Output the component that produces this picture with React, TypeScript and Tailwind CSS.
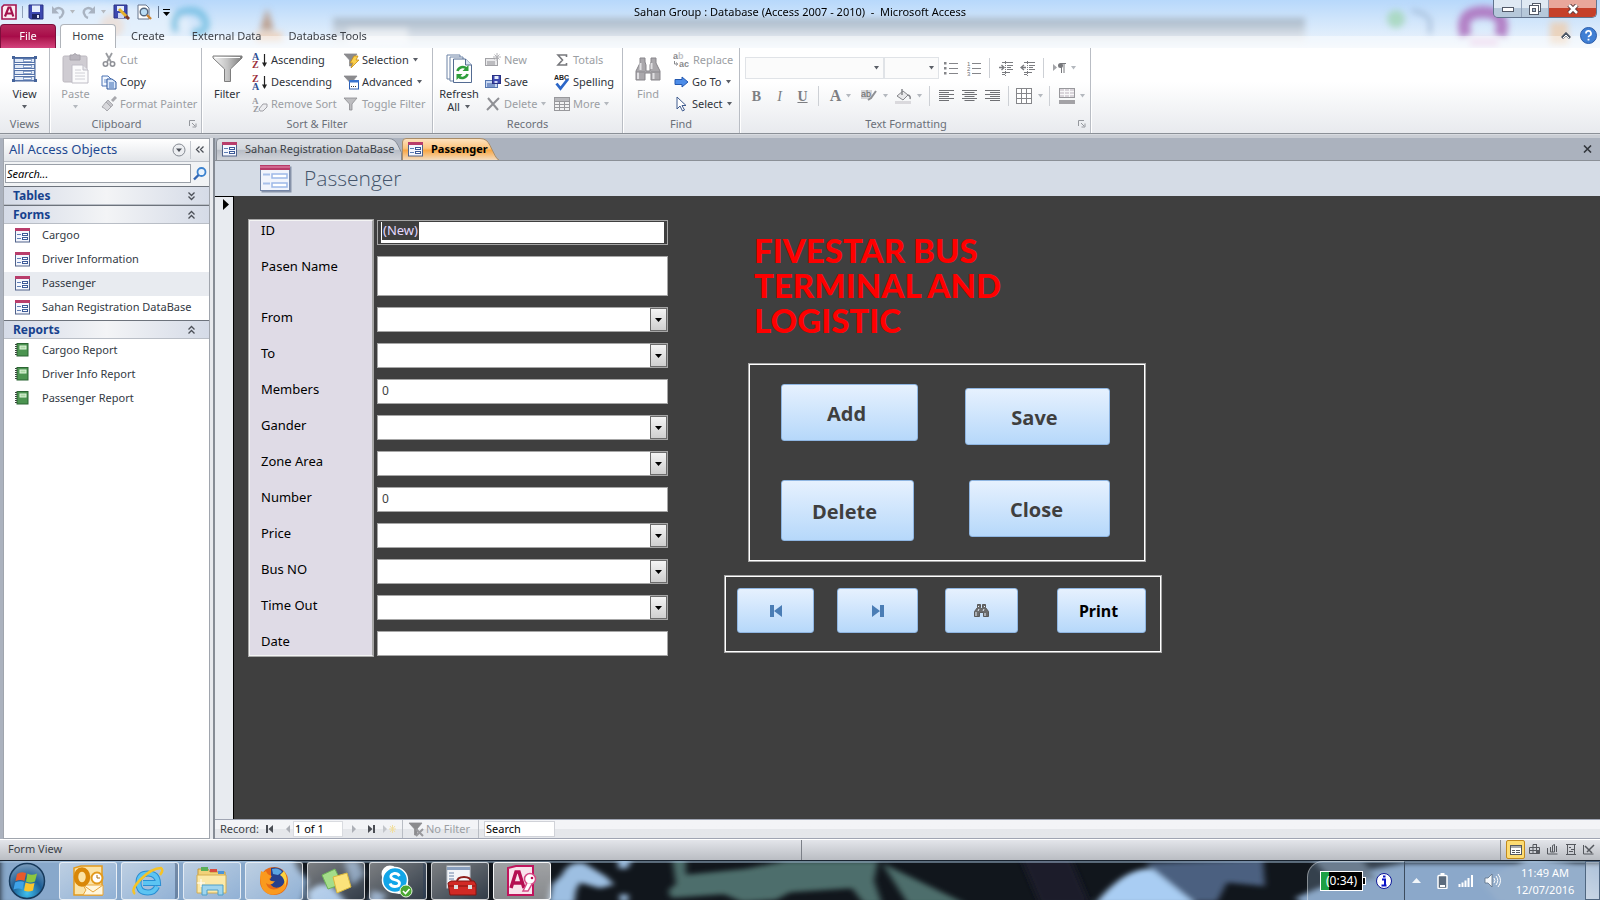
import { useState, type ReactNode } from 'react'
import clsx from 'clsx'

interface NavItem {
  name: string
  active?: boolean
}

interface Field {
  id: string
  label: string
  kind: 'new' | 'text' | 'tall' | 'combo'
  value?: string
}

const FORMS: NavItem[] = [
  { name: 'Cargoo' },
  { name: 'Driver Information' },
  { name: 'Passenger', active: true },
  { name: 'Sahan Registration DataBase' },
]

const REPORTS: NavItem[] = [{ name: 'Cargoo Report' }, { name: 'Driver Info Report' }, { name: 'Passenger Report' }]

const FIELDS: Field[] = [
  { id: 'id', label: 'ID', kind: 'new', value: '(New)' },
  { id: 'pasen-name', label: 'Pasen Name', kind: 'tall' },
  { id: 'from', label: 'From', kind: 'combo' },
  { id: 'to', label: 'To', kind: 'combo' },
  { id: 'members', label: 'Members', kind: 'text', value: '0' },
  { id: 'gander', label: 'Gander', kind: 'combo' },
  { id: 'zone-area', label: 'Zone Area', kind: 'combo' },
  { id: 'number', label: 'Number', kind: 'text', value: '0' },
  { id: 'price', label: 'Price', kind: 'combo' },
  { id: 'bus-no', label: 'Bus NO', kind: 'combo' },
  { id: 'time-out', label: 'Time Out', kind: 'combo' },
  { id: 'date', label: 'Date', kind: 'text' },
]

/* ---------- icons ---------- */

function Svg({ w = 16, h = 16, children }: { w?: number; h?: number; children: ReactNode }) {
  return (
    <svg width={w} height={h} viewBox={`0 0 ${w} ${h}`} className="shrink-0" aria-hidden="true">
      {children}
    </svg>
  )
}

function Caret({ muted }: { muted?: boolean }) {
  return (
    <Svg w={7} h={4}>
      <path d="M1 0h5L3.500 3.500z" fill={muted ? '#b4b8be' : '#5a5e66'} />
    </Svg>
  )
}

function AccessLogo() {
  return (
    <Svg w={16} h={16}>
      <path d="M3 1h12v14H1V3z" fill="#fbeaf1" stroke="#a4124d" strokeWidth="1.600" />
      <path d="M4 12.500L7.500 3.500h1.800l3 9M5.500 9.500h5.500" fill="none" stroke="#a4124d" strokeWidth="2.200" />
    </Svg>
  )
}

function SaveIcon() {
  return (
    <Svg w={16} h={16}>
      <path d="M1 1h14v14H2.500L1 13.500z" fill="#3d49b0" stroke="#2a3284" />
      <rect x="4" y="1.500" width="8" height="6.500" fill="#e6eefc" />
      <rect x="4" y="10" width="8" height="5" fill="#1d2560" />
      <rect x="9" y="11" width="2" height="3" fill="#dfe4f6" />
    </Svg>
  )
}

function UndoIcon({ flip }: { flip?: boolean }) {
  return (
    <Svg w={14} h={14}>
      <g transform={flip ? 'translate(14 0) scale(-1 1)' : undefined}>
        <path d="M3 5.500Q6 2 9.500 3.500t2.500 5-4 4.500" fill="none" stroke="#a9b3c1" strokeWidth="2.400" />
        <path d="M1 1v7.500h7z" fill="#a9b3c1" />
      </g>
    </Svg>
  )
}

function SaveEditIcon() {
  return (
    <Svg w={17} h={16}>
      <path d="M1 1h13v13H1z" fill="#3d49b0" stroke="#2a3284" />
      <rect x="4" y="2" width="7" height="5" fill="#e6eefc" />
      <path d="M5 9h6v5H5z" fill="#cdd6f4" />
      <path d="M6 5l8 8" stroke="#e7b22c" strokeWidth="3" />
      <path d="M13 12l3 3" stroke="#7d3a2c" strokeWidth="3" />
    </Svg>
  )
}

function PreviewIcon() {
  return (
    <Svg w={16} h={16}>
      <path d="M2 1h8l3 3v11H2z" fill="#fff" stroke="#66758c" />
      <circle cx="8" cy="8" r="3.800" fill="#b9dcf5" stroke="#53657d" strokeWidth="1.400" />
      <path d="M11 11l4 4" stroke="#c9822f" strokeWidth="2.400" />
    </Svg>
  )
}

function FormIcon() {
  return (
    <Svg w={15} h={15}>
      <rect x="0.500" y="0.500" width="14" height="13.500" fill="#f4f6fd" stroke="#50628a" />
      <rect x="0" y="0" width="15" height="3" fill="#b93d6b" />
      <path d="M2 6.500h4M2 10.500h4" stroke="#5f7fb6" />
      <rect x="7.500" y="5.500" width="5" height="2" fill="#fff" stroke="#3c5a98" />
      <rect x="7.500" y="9.500" width="5" height="2" fill="#fff" stroke="#3c5a98" />
    </Svg>
  )
}

function FormIconLarge() {
  return (
    <Svg w={32} h={28}>
      <rect x="1.500" y="1.500" width="30" height="26" fill="#8793a9" />
      <rect x="0.500" y="0.500" width="29" height="25" fill="#f1f4fc" stroke="#7385a6" />
      <rect x="0" y="0" width="30" height="5" fill="#b73a68" />
      <rect x="0" y="1" width="30" height="2" fill="#d0668e" />
      <path d="M3 9.500h7M3 18.500h7" stroke="#a8c0ea" strokeWidth="2" />
      <rect x="12" y="9" width="15" height="4" fill="#fff" stroke="#9db8e8" strokeWidth="1.500" />
      <rect x="12" y="18" width="15" height="4" fill="#fff" stroke="#9db8e8" strokeWidth="1.500" />
    </Svg>
  )
}

function ReportIcon() {
  return (
    <Svg w={15} h={15}>
      <rect x="2" y="0.500" width="11" height="12.500" fill="#4b9450" stroke="#2b6432" />
      <rect x="5" y="3" width="6" height="3" fill="#a9d9a4" stroke="#e0f3dc" />
      <path d="M1 1v12" stroke="#3b463d" strokeWidth="2" strokeDasharray="1 1" />
    </Svg>
  )
}

function ViewIcon() {
  return (
    <Svg w={27} h={28}>
      <path d="M3 1v26M24 1v26M1 2.500h25M1 26h25" stroke="#44639a" />
      {[4, 10, 16, 22].map((y) => (
        <g key={y}>
          <rect x="3.500" y={y - 0.500} width="20" height="4" fill="#dfe8f6" stroke="#5674aa" />
          <rect x="12.500" y={y + 0.500} width="8" height="2" fill="#fff" stroke="#7591c0" strokeWidth="0.800" />
        </g>
      ))}
      <path d="M1 1h3v3H1zM23 1h3v3h-3zM1 24h3v3H1zM23 24h3v3h-3z" fill="#44639a" />
    </Svg>
  )
}

function PasteIcon() {
  return (
    <Svg w={28} h={32}>
      <rect x="1" y="3" width="24" height="26" rx="1.500" fill="#cfccd2" stroke="#bcb8bf" />
      <path d="M8 2h3q2-3 4 0h3v5H8z" fill="#b9b5bd" stroke="#a8a4ac" />
      <path d="M10 12h11l5 5v13H10z" fill="#fbfbfc" stroke="#bfbdc6" />
      <path d="M21 12v5h5" fill="#e8e8ec" stroke="#bfbdc6" />
      <path d="M13 17h6M13 20h10M13 23h10M13 26h10" stroke="#d0d0d6" />
    </Svg>
  )
}

function CutIcon() {
  return (
    <Svg>
      <path d="M5 1l5 9M11 1L6 10" stroke="#9a9ca1" strokeWidth="1.800" />
      <circle cx="4.500" cy="12" r="2.200" fill="none" stroke="#8f9197" strokeWidth="1.600" />
      <circle cx="11.500" cy="12" r="2.200" fill="none" stroke="#8f9197" strokeWidth="1.600" />
    </Svg>
  )
}

function CopyIcon() {
  return (
    <Svg>
      <path d="M1 2h6l3 3v7H1z" fill="#f3f8ff" stroke="#4a72b4" />
      <path d="M3 6h4M3 8h3" stroke="#6f95d0" />
      <path d="M6 5h5l4 3v7H6z" fill="#dce9fb" stroke="#2c579c" />
      <path d="M8 9h5M8 11h5M8 13h5" stroke="#3b6ab3" />
    </Svg>
  )
}

function PainterIcon() {
  return (
    <Svg>
      <path d="M15 1l-4 4" stroke="#a8a8ad" strokeWidth="3" />
      <path d="M7 4l5 5-2 2-5-5z" fill="#c4c4c9" stroke="#9d9da2" strokeWidth="0.800" />
      <path d="M5 6l5 5-4 4q-2-3-5-4z" fill="#d8d8dc" stroke="#a8a8ad" />
    </Svg>
  )
}

function FunnelBig() {
  return (
    <Svg w={31} h={28}>
      <defs>
        <linearGradient id="funnel" x1="0" x2="1">
          <stop offset="0" stopColor="#f4f4f4" />
          <stop offset="0.500" stopColor="#c4c4c4" />
          <stop offset="1" stopColor="#7e7e7e" />
        </linearGradient>
      </defs>
      <path d="M1 1h29v2L18.500 14v12.500h-6V14L1 3z" fill="url(#funnel)" stroke="#7d7d7d" />
      <path d="M3 2.500h25" stroke="#fff" />
    </Svg>
  )
}

function SortIcon({ top, bottom }: { top: 'A' | 'Z'; bottom: 'A' | 'Z' }) {
  const color = (l: string) => (l === 'A' ? '#2f4f93' : '#9c2f3b')
  return (
    <Svg w={16} h={17}>
      <text x="0" y="8" fontFamily="Liberation Serif" fontWeight="700" fontSize="10" fill={color(top)}>
        {top}
      </text>
      <text x="0" y="16" fontFamily="Liberation Serif" fontWeight="700" fontSize="10" fill={color(bottom)}>
        {bottom}
      </text>
      <path d="M12.500 2v12" stroke="#222" strokeWidth="1.200" />
      <path d="M10 10.500h5L12.500 15z" fill="#222" />
    </Svg>
  )
}

function RemoveSortIcon() {
  return (
    <Svg w={16} h={17}>
      <text x="0" y="8" fontFamily="Liberation Serif" fontWeight="700" fontSize="9" fill="#9a9aa0">
        A
      </text>
      <text x="1" y="16" fontFamily="Liberation Serif" fontWeight="700" fontSize="9" fill="#9a9aa0">
        Z
      </text>
      <path d="M7 13l4-5h4v3l-4 4H8z" fill="#ececef" stroke="#a0a0a6" />
    </Svg>
  )
}

function FunnelSmall({ extra }: { extra?: 'bolt' | 'window' | 'cross' }) {
  return (
    <Svg>
      <path d="M1 2h13L9 8v6H6.500V8z" fill={extra === undefined ? '#bdbdc0' : '#8b8b8e'} stroke="#8c8c8f" strokeWidth="0.800" />
      {extra === 'bolt' && <path d="M11 4h4l-2 4h3l-8 8 2-5H7z" fill="#fbd04c" stroke="#c58b14" strokeWidth="0.800" />}
      {extra === 'window' && (
        <>
          <rect x="6.500" y="6.500" width="9" height="8.500" fill="#fff" stroke="#2c5db0" />
          <rect x="6" y="6" width="10" height="2.500" fill="#3a74d0" />
          <path d="M8 12.500h6" stroke="#333" strokeDasharray="1 1" />
        </>
      )}
      {extra === 'cross' && <path d="M8 8l7 7M15 8l-7 7" stroke="#98989c" strokeWidth="2" />}
    </Svg>
  )
}

function RefreshIcon() {
  return (
    <Svg w={27} h={30}>
      <path d="M1 1h13v24H1z" fill="#fff" stroke="#6d83a6" />
      <path d="M4 3h13v24H4z" fill="#fff" stroke="#6d83a6" />
      <path d="M7.500 5h12l6 6v17.500h-18z" fill="#fdfefe" stroke="#536b92" />
      <path d="M19.500 5v6h6" fill="#d9e4f2" stroke="#536b92" />
      <path d="M11.500 17a5.500 5.500 0 0 1 9-2.500M21.500 20a5.500 5.500 0 0 1-9 2.500" fill="none" stroke="#2f9e3c" strokeWidth="2.600" />
      <path d="M22.500 11v6h-6zM10.500 26v-6h6z" fill="#2f9e3c" />
    </Svg>
  )
}

function NewRecordIcon() {
  return (
    <Svg>
      <rect x="0.500" y="6.500" width="12" height="7" fill="#e9e9eb" stroke="#a2a2a6" />
      <path d="M2 10h8M2 12h8" stroke="#8f8f94" />
      <path d="M12 1v8M8 5h8M9.500 2.500l5 5M14.500 2.500l-5 5" stroke="#b4b4b8" />
    </Svg>
  )
}

function SaveRecordIcon() {
  return (
    <Svg>
      <rect x="0.500" y="6.500" width="12" height="7" fill="#c9d8f2" stroke="#5576b0" />
      <path d="M2 10h8M2 12h8" stroke="#2f55a0" />
      <rect x="7.500" y="1.500" width="8" height="8" fill="#3d49b0" stroke="#2a3284" />
      <rect x="9.500" y="2" width="4" height="3" fill="#e6eefc" />
      <rect x="9.500" y="7" width="3" height="2" fill="#cfd8f4" />
    </Svg>
  )
}

function DeleteIcon() {
  return (
    <Svg>
      <path d="M3 2l10 12M14 2L2 14" fill="none" stroke="#8f9095" strokeWidth="2" />
    </Svg>
  )
}

function SigmaIcon() {
  return (
    <Svg>
      <path d="M12.500 5V3H4l4.500 5L4 13h8.500v-2" fill="none" stroke="#77787c" strokeWidth="1.600" />
    </Svg>
  )
}

function SpellingIcon() {
  return (
    <Svg w={16} h={17}>
      <text x="0" y="6" fontFamily="Liberation Sans" fontSize="7" fontWeight="700" fill="#222">
        ABC
      </text>
      <path d="M2.500 9.500l4 5L14 5" fill="none" stroke="#2b66c8" strokeWidth="2.800" />
    </Svg>
  )
}

function TableIcon() {
  return (
    <Svg>
      <rect x="0.500" y="1.500" width="15" height="13" fill="#f2f2f3" stroke="#98989c" />
      <rect x="1" y="2" width="14" height="3" fill="#b9b9bd" />
      <path d="M1 5.500h14M1 8.500h14M1 11.500h14M5.500 5v9M10.500 5v9" stroke="#98989c" />
    </Svg>
  )
}

function BinocularsIcon() {
  return (
    <Svg w={28} h={28}>
      <path d="M6 3h5v4l1 3v6h4v-6l1-3V3h5v5l4 8v9h-9v-7h-6v7H2v-9l4-8z" fill="#aaa8ac" stroke="#88868b" />
      <path d="M4 17v7M6.500 8v7M19.500 18v6M17.500 8v6" stroke="#e0dfe2" strokeWidth="2" />
      <path d="M2 17h9M17 17h9" stroke="#8b898e" />
    </Svg>
  )
}

function ReplaceIcon() {
  return (
    <Svg w={17} h={16}>
      <text x="0" y="7" fontFamily="Liberation Sans" fontWeight="700" fontSize="9" fill="#88898d">
        a<tspan fill="#c2c2c6">b</tspan>
      </text>
      <text x="6" y="15" fontFamily="Liberation Sans" fontWeight="700" fontSize="9" fill="#88898d">
        ac
      </text>
      <path d="M1.500 9v3h3M3 10.500L4.800 12 3 13.500" fill="none" stroke="#88898d" />
    </Svg>
  )
}

function GoToIcon() {
  return (
    <Svg>
      <path d="M2 5.500h7V3l6 5-6 5v-2.500H2z" fill="#4c8ce8" stroke="#2559b0" />
    </Svg>
  )
}

function PointerIcon() {
  return (
    <Svg>
      <path d="M4 1v12l3-3 2.500 5 2-1L9 9.500h4z" fill="#fff" stroke="#3e5a8e" />
    </Svg>
  )
}

function ListIcon({ numbered }: { numbered?: boolean }) {
  return (
    <Svg w={14} h={16}>
      {[3, 8, 13].map((y, i) => (
        <g key={y}>
          <path d={`M5 ${y}.500h9`} stroke="#85868a" />
          {numbered ? (
            <text x="0" y={y + 3} fontFamily="Liberation Sans" fontSize="6" fill="#6f7074">
              {i + 1}
            </text>
          ) : (
            <rect x="0" y={y - 1} width="2.500" height="2.500" fill="#85868a" />
          )}
        </g>
      ))}
    </Svg>
  )
}

function IndentIcon({ out }: { out?: boolean }) {
  return (
    <Svg>
      <path d="M4 2.500h11M9 5.500h6M9 7.500h4M9 9.500h6M4 12.500h8M4 14.500h3" stroke="#7b7c80" />
      <path d={out ? 'M1 7.500h5M4 5L1 7.500 4 10' : 'M1 7.500h5M3.500 5L6 7.500 3.500 10'} fill="none" stroke="#7b7c80" strokeWidth="1.400" />
      <path d="M7.500 1v15" stroke="#7b7c80" strokeDasharray="1 1" />
    </Svg>
  )
}

function AlignIcon({ side }: { side: 'left' | 'center' | 'right' }) {
  return (
    <Svg w={15} h={14}>
      {[1, 3, 5, 7, 9, 11].map((y, i) => {
        const w = i % 2 === 0 ? 15 : 10
        const x = side === 'left' ? 0 : side === 'right' ? 15 - w : (15 - w) / 2
        return <rect key={y} x={x} y={y} width={w} height="1" fill="#6f7074" />
      })}
    </Svg>
  )
}

function PilcrowIcon() {
  return (
    <Svg w={14} h={12}>
      <path d="M1 2v7l4-3.500z" fill="#a3a4a8" />
      <path d="M9.500 11V1M12 11V1M14 1.500H8.500" stroke="#77787c" />
      <circle cx="8.500" cy="3.500" r="2.500" fill="#77787c" />
    </Svg>
  )
}

function HighlightIcon() {
  return (
    <Svg w={17} h={14}>
      <rect x="0" y="1" width="11" height="9" fill="#d6d6d9" />
      <text x="0" y="8" fontFamily="Liberation Sans" fontSize="9" fill="#66676b">
        ab
      </text>
      <path d="M15 2l-5 7-3 2" fill="none" stroke="#8f9094" strokeWidth="2" />
    </Svg>
  )
}

function BucketIcon() {
  return (
    <Svg w={17} h={17}>
      <path d="M2 8l6-5 5 4-5 5z" fill="#e9e9eb" stroke="#85868a" />
      <path d="M7 1v6M13 7q3 1 2 4" fill="none" stroke="#85868a" strokeWidth="1.500" />
      <rect x="0" y="13" width="16" height="3" fill="#dad9dd" />
    </Svg>
  )
}

function GridIcon() {
  return (
    <Svg w={17} h={17}>
      <rect x="0.500" y="0.500" width="15" height="15" fill="#fff" stroke="#85868a" />
      <path d="M5.500 0v16M10.500 0v16M0 5.500h16M0 10.500h16" stroke="#85868a" />
    </Svg>
  )
}

function RowFillIcon() {
  return (
    <Svg w={16} h={16}>
      <rect x="0.500" y="0.500" width="15" height="9" fill="#d9d4da" stroke="#98989c" />
      <path d="M1 3.500h14M1 6.500h14M5.500 1v8M10.500 1v8" stroke="#f7f7f8" />
      <rect x="0" y="12" width="16" height="4" fill="#a3a2a6" />
    </Svg>
  )
}

function Launcher() {
  return (
    <Svg w={8} h={8}>
      <path d="M0.500 6V0.500H6" fill="none" stroke="#94979d" />
      <path d="M3 3l3 3M7 3.500V7H3.500" fill="none" stroke="#94979d" />
    </Svg>
  )
}

function Chevrons({ dir }: { dir: 'up' | 'down' | 'left' }) {
  const d = {
    up: 'M1.500 4.500l3-3 3 3M1.500 8.500l3-3 3 3',
    down: 'M1.500 1.500l3 3 3-3M1.500 5.500l3 3 3-3',
    left: 'M4.500 1.500l-3 3 3 3M8.500 1.500l-3 3 3 3',
  }[dir]
  return (
    <Svg w={10} h={10}>
      <path d={d} fill="none" stroke="#4c5058" strokeWidth="1.300" />
    </Svg>
  )
}

function SearchGlass() {
  return (
    <Svg w={14} h={14}>
      <circle cx="8.500" cy="5" r="4" fill="#e9f3fd" stroke="#3b82cf" strokeWidth="1.800" />
      <path d="M5.500 8L1 12.500" stroke="#3266b4" strokeWidth="2.400" />
    </Svg>
  )
}

function JumpIcon({ kind, color = '#4a4d54' }: { kind: 'first' | 'prev' | 'next' | 'last'; color?: string }) {
  const d = {
    first: 'M0 0h2v8H0zM7 0v8L2.500 4z',
    prev: 'M6 0v8L2 4z',
    next: 'M1 0v8l4-4z',
    last: 'M0 0v8l4.500-4zM5 0h2v8H5z',
  }[kind]
  return (
    <Svg w={7} h={8}>
      <path d={d} fill={color} />
    </Svg>
  )
}

/* ---------- title bar ---------- */

function GlassBackdrop() {
  return (
    <svg className="absolute inset-0 h-full w-full" viewBox="0 0 1600 48" preserveAspectRatio="none" aria-hidden="true">
      <defs>
        <linearGradient id="glass" x1="0" y1="0" x2="0" y2="1">
          <stop offset="0" stopColor="#b7d8fb" />
          <stop offset="0.350" stopColor="#cce3fb" />
          <stop offset="1" stopColor="#f0f6fc" />
        </linearGradient>
        <linearGradient id="band" x1="0" y1="0" x2="0" y2="1">
          <stop offset="0" stopColor="#a3b4c6" />
          <stop offset="1" stopColor="#f3f6f9" />
        </linearGradient>
        <filter id="soft" x="-20%" y="-50%" width="140%" height="200%">
          <feGaussianBlur stdDeviation="3" />
        </filter>
      </defs>
      <rect width="1600" height="48" fill="url(#glass)" />
      <g filter="url(#soft)">
        <ellipse cx="80" cy="24" rx="110" ry="22" fill="#e8f2fc" opacity="0.700" />
        <path d="M176 32q-6-18 10-21t20 12q0 12-14 8" fill="none" stroke="#62b7dc" strokeWidth="7" opacity="0.750" />
        <path d="M260 30l7-22 7 22z" fill="#b58f75" opacity="0.800" />
        <rect x="256" y="32" width="26" height="9" fill="#f1c9a8" opacity="0.700" />
        <circle cx="112" cy="26" r="12" fill="#f0d8c8" opacity="0.600" />
        <rect x="333" y="18" width="972" height="26" fill="url(#band)" />
        <rect x="348" y="28" width="60" height="16" fill="#fff" opacity="0.500" />
        <circle cx="1396" cy="19" r="9" fill="#a3d6b6" opacity="0.800" />
        <path d="M1412 10l12 4 6 6v14" fill="none" stroke="#9eb6d3" strokeWidth="3" />
        <path d="M1466 36q-8-24 17-24t17 24" fill="none" stroke="#ad6fbc" strokeWidth="12" opacity="0.850" />
        <rect x="1470" y="38" width="28" height="8" fill="#e6cdea" />
        <rect x="1550" y="22" width="18" height="22" fill="#efc9a4" opacity="0.700" />
      </g>
      <rect y="36" width="1600" height="12" fill="#fff" opacity="0.450" />
    </svg>
  )
}

function TitleBar() {
  return (
    <div className="relative flex h-6 items-center pl-px">
      <div className="flex items-center">
        <AccessLogo />
        <span className="mx-[5px] h-3 w-px bg-slate-400" />
        <button aria-label="Save" className="mr-[7px]"><SaveIcon /></button>
        <button aria-label="Undo" className="flex items-center gap-1"><UndoIcon /><Caret muted /></button>
        <button aria-label="Redo" className="ml-[6px] flex items-center gap-1"><UndoIcon flip /><Caret muted /></button>
        <button aria-label="Save as" className="ml-[6px]"><SaveEditIcon /></button>
        <button aria-label="Print preview" className="ml-[6px]"><PreviewIcon /></button>
        <span className="mr-1 ml-[6px] h-3 w-px bg-slate-500" />
        <button aria-label="Customize toolbar" className="flex flex-col items-center gap-[2px]">
          <span className="h-px w-[7px] bg-black" />
          <Svg w={7} h={4}><path d="M0 0h7L3.500 4z" fill="#000" /></Svg>
        </button>
      </div>
      <h1 className="pointer-events-none absolute inset-x-0 text-center text-[11px] leading-6 whitespace-pre text-black">
        {'Sahan Group : Database (Access 2007 - 2010)  -  Microsoft Access'}
      </h1>
      <div className="absolute top-0 right-[3px] flex h-[18px] overflow-hidden rounded-b-[5px] border border-t-0 border-slate-500">
        <button aria-label="Minimize" className="flex w-7 items-center justify-center border-r border-slate-400 bg-linear-to-b from-[#dfe9f3] from-50% to-[#b6c8da] to-50%">
          <Svg w={12} h={6}><rect x="0.500" y="1.500" width="11" height="4" fill="#fff" stroke="#535a68" /></Svg>
        </button>
        <button aria-label="Restore" className="flex w-[27px] items-center justify-center border-r border-slate-400 bg-linear-to-b from-[#dfe9f3] from-50% to-[#b6c8da] to-50%">
          <Svg w={12} h={12}>
            <rect x="3.500" y="0.500" width="8" height="8" fill="#fff" stroke="#535a68" />
            <rect x="0.500" y="2.500" width="9" height="9" fill="#fff" stroke="#535a68" />
            <rect x="3.500" y="5.500" width="3" height="3" fill="#a9bccf" stroke="#535a68" />
          </Svg>
        </button>
        <button aria-label="Close window" className="flex w-[47px] items-center justify-center bg-linear-to-b from-[#e9a79b] from-45% to-[#c5402a] to-50%">
          <Svg w={12} h={10}>
            <path d="M2 1l8 8M10 1L2 9" stroke="#5b3a3d" strokeWidth="4.500" />
            <path d="M2 1l8 8M10 1L2 9" stroke="#fff" strokeWidth="2.500" />
          </Svg>
        </button>
      </div>
    </div>
  )
}

function RibbonTabs() {
  return (
    <nav className="relative flex h-6 items-end pr-[3px] text-[11px] text-[#3b3f46]">
      <button className="h-6 w-[56px] rounded-t border border-b-0 border-[#7d0f3c] bg-linear-to-b from-[#b5285d] via-[#a80b49] to-[#d4427d] text-white">
        File
      </button>
      <button className="z-10 ml-1 h-6 w-[56px] rounded-t border border-b-0 border-[#b0b4ba] bg-white">Home</button>
      <button className="ml-[15px] h-6">Create</button>
      <button className="ml-[27px] h-6">External Data</button>
      <button className="ml-[27px] h-6">Database Tools</button>
      <div className="mb-1 ml-auto flex items-center gap-[9px]">
        <button aria-label="Collapse ribbon">
          <Svg w={10} h={8}><path d="M1 6l4-4 4 4" fill="none" stroke="#4b5563" strokeWidth="3" /><path d="M2 6l3-3 3 3" fill="none" stroke="#fff" /></Svg>
        </button>
        <button aria-label="Help">
          <Svg w={17} h={17}>
            <circle cx="8.500" cy="8.500" r="8" fill="#3f7fd4" stroke="#2c5ca8" />
            <path d="M6 6.500a2.500 2.500 0 1 1 3.500 2.200q-1 .5-1 1.600M8.500 11.800v1.800" fill="none" stroke="#fff" strokeWidth="1.800" />
          </Svg>
        </button>
      </div>
    </nav>
  )
}

/* ---------- ribbon ---------- */

function Group({ label, className, launcher, children }: { label: string; className: string; launcher?: boolean; children: ReactNode }) {
  return (
    <section className={clsx('flex shrink-0 flex-col border-r border-[#b9bdc4] pt-px shadow-[1px_0_0_#fff]', className)}>
      <div className="flex h-[66px]">{children}</div>
      <div className={clsx('relative h-[17px] text-center text-[11px] leading-[17px] text-[#6a6f78]', launcher && 'pr-[18px]')}>
        {label}
        {launcher && (
          <button aria-label={`${label} options`} className="absolute right-1 bottom-1"><Launcher /></button>
        )}
      </div>
    </section>
  )
}

function Big({ icon, lines, muted, caret, className }: { icon: ReactNode; lines: string[]; muted?: boolean; caret?: boolean; className: string }) {
  return (
    <button className={clsx('flex flex-col items-center text-[11px] leading-[13px]', muted ? 'text-[#9b9ea3]' : 'text-[#2f333a]', className)}>
      <span className="flex h-9 items-center pt-1">{icon}</span>
      <span className="pt-[2px]">{lines[0]}</span>
      <span className="flex h-[13px] items-center gap-1">
        {lines[1]}
        {caret && <Caret muted={muted} />}
      </span>
    </button>
  )
}

function Small({ icon, label, muted, caret }: { icon: ReactNode; label: string; muted?: boolean; caret?: boolean }) {
  return (
    <button className={clsx('flex h-[22px] items-center gap-[3px] text-[11px] whitespace-nowrap', muted ? 'text-[#9b9ea3]' : 'text-[#2f333a]')}>
      {icon}
      {label}
      {caret && <Caret muted={muted} />}
    </button>
  )
}

function Sep() {
  return <span className="h-5 w-px bg-[#cdd0d5]" />
}

function Tool({ label, className, caret, children }: { label: string; className: string; caret?: boolean; children: ReactNode }) {
  return (
    <button aria-label={label} className={clsx('flex h-5 items-center justify-center gap-1 text-[#7d7e82]', className)}>
      {children}
      {caret && <Caret muted />}
    </button>
  )
}

function RibbonCombo({ label, className }: { label: string; className: string }) {
  return (
    <span className={clsx('relative flex', className)}>
      <select aria-label={label} disabled className="h-[22px] w-full appearance-none border border-[#e0e3e7] bg-[#fbfbfb]" />
      <span className="pointer-events-none absolute top-[9px] right-1 flex"><Caret /></span>
    </span>
  )
}

function Ribbon() {
  return (
    <div className="flex h-[87px] overflow-hidden border-y border-t-[#b0b4ba] border-b-[#8b9097] bg-linear-to-b from-white from-40% to-[#e8eaee]">
      <Group label="Views" className="w-[50px]">
        <Big className="w-[49px]" icon={<ViewIcon />} lines={['View']} caret />
      </Group>
      <Group label="Clipboard" className="w-[152px]" launcher>
        <Big className="w-[51px]" icon={<PasteIcon />} lines={['Paste']} muted caret />
        <div className="flex flex-col">
          <Small icon={<CutIcon />} label="Cut" muted />
          <Small icon={<CopyIcon />} label="Copy" />
          <Small icon={<PainterIcon />} label="Format Painter" muted />
        </div>
      </Group>
      <Group label="Sort & Filter" className="w-[231px]">
        <Big className="w-[50px]" icon={<FunnelBig />} lines={['Filter']} />
        <div className="flex w-[91px] flex-col">
          <Small icon={<SortIcon top="A" bottom="Z" />} label="Ascending" />
          <Small icon={<SortIcon top="Z" bottom="A" />} label="Descending" />
          <Small icon={<RemoveSortIcon />} label="Remove Sort" muted />
        </div>
        <div className="flex flex-col">
          <Small icon={<FunnelSmall extra="bolt" />} label="Selection" caret />
          <Small icon={<FunnelSmall extra="window" />} label="Advanced" caret />
          <Small icon={<FunnelSmall />} label="Toggle Filter" muted />
        </div>
      </Group>
      <Group label="Records" className="w-[190px]">
        <Big className="w-[52px]" icon={<RefreshIcon />} lines={['Refresh', 'All']} caret />
        <div className="flex w-[69px] flex-col">
          <Small icon={<NewRecordIcon />} label="New" muted />
          <Small icon={<SaveRecordIcon />} label="Save" />
          <Small icon={<DeleteIcon />} label="Delete" muted caret />
        </div>
        <div className="flex flex-col">
          <Small icon={<SigmaIcon />} label="Totals" muted />
          <Small icon={<SpellingIcon />} label="Spelling" />
          <Small icon={<TableIcon />} label="More" muted caret />
        </div>
      </Group>
      <Group label="Find" className="w-[117px]">
        <Big className="w-[50px]" icon={<BinocularsIcon />} lines={['Find']} muted />
        <div className="flex flex-col">
          <Small icon={<ReplaceIcon />} label="Replace" muted />
          <Small icon={<GoToIcon />} label="Go To" caret />
          <Small icon={<PointerIcon />} label="Select" caret />
        </div>
      </Group>
      <Group label="Text Formatting" className="w-[351px]" launcher>
        <div className="flex flex-1 flex-col gap-[7px] pt-2 pl-[5px]">
          <div className="flex h-[22px] items-center">
            <RibbonCombo label="Font" className="w-[139px]" />
            <RibbonCombo label="Font size" className="w-[55px]" />
            <Tool label="Bullets" className="w-6"><ListIcon /></Tool>
            <Tool label="Numbering" className="w-[22px]"><ListIcon numbered /></Tool>
            <span className="w-1" />
            <Sep />
            <Tool label="Increase indent" className="ml-1 w-[23px]"><IndentIcon /></Tool>
            <Tool label="Decrease indent" className="w-[22px]"><IndentIcon out /></Tool>
            <span className="w-1" />
            <Sep />
            <Tool label="Text direction" className="ml-[6px] w-7" caret><PilcrowIcon /></Tool>
          </div>
          <div className="flex h-5 items-center font-['Liberation_Serif',serif] text-[14px]">
            <Tool label="Bold" className="w-[23px]"><b>B</b></Tool>
            <Tool label="Italic" className="w-[23px]"><i>I</i></Tool>
            <Tool label="Underline" className="w-[23px]"><b className="underline">U</b></Tool>
            <span className="w-1" />
            <Sep />
            <Tool label="Font color" className="ml-2 w-7" caret><b className="text-[16px]">A</b></Tool>
            <Tool label="Highlight" className="ml-[6px] w-7" caret><HighlightIcon /></Tool>
            <Tool label="Fill color" className="ml-[6px] w-7" caret><BucketIcon /></Tool>
            <span className="w-[6px]" />
            <Sep />
            <Tool label="Align left" className="ml-[5px] w-[23px]"><AlignIcon side="left" /></Tool>
            <Tool label="Center" className="w-[23px]"><AlignIcon side="center" /></Tool>
            <Tool label="Align right" className="w-[23px]"><AlignIcon side="right" /></Tool>
            <span className="w-1" />
            <Sep />
            <Tool label="Gridlines" className="ml-2 w-[26px]" caret><GridIcon /></Tool>
            <span className="w-[6px]" />
            <Sep />
            <Tool label="Row color" className="ml-2 w-7" caret><RowFillIcon /></Tool>
          </div>
        </div>
      </Group>
    </div>
  )
}

/* ---------- navigation pane ---------- */

function NavHeader({ title, open, onToggle }: { title: string; open: boolean; onToggle: () => void }) {
  return (
    <button
      onClick={onToggle}
      className="flex h-[19px] w-full items-center justify-between border-t border-b border-t-[#6d737c] border-b-[#b9bec6] bg-linear-to-r from-[#d5dbe7] via-[#f3f4f6] to-[#d5dbe7] pr-3 pl-[9px] text-[12px] font-bold text-[#17428e]"
    >
      {title}
      <Chevrons dir={open ? 'up' : 'down'} />
    </button>
  )
}

function NavList({ items, icon }: { items: NavItem[]; icon: ReactNode }) {
  return (
    <ul>
      {items.map((item) => (
        <li key={item.name}>
          <a
            href="#"
            className={clsx('flex h-6 items-center gap-[12px] pb-[2px] pl-[11px] text-[11px] whitespace-nowrap text-[#333a44]', item.active && 'bg-[#e8ebf0]')}
          >
            {icon}
            {item.name}
          </a>
        </li>
      ))}
    </ul>
  )
}

function NavPane() {
  const [open, setOpen] = useState({ tables: false, forms: true, reports: true })

  return (
    <aside className="flex w-[207px] shrink-0 flex-col border border-[#a0a5ad] bg-white">
      <div className="flex h-[23px] items-center border-b border-[#b9bec6] bg-linear-to-b from-white to-[#e3e6ea] pl-[5px] text-[13px] text-[#1f4a91]">
        All Access Objects
        <button aria-label="Choose category" className="ml-auto">
          <Svg w={14} h={14}>
            <circle cx="7" cy="7" r="6" fill="#eceef1" stroke="#868b93" />
            <path d="M4 5.500h6L7 9z" fill="#4c5058" />
          </Svg>
        </button>
        <span className="mx-1 h-[18px] w-px bg-[#c5c9cf]" />
        <button aria-label="Collapse pane" className="mr-1"><Chevrons dir="left" /></button>
      </div>
      <div className="flex h-6 items-center gap-[2px] bg-[#f1f3f5] pb-px pl-px">
        <input aria-label="Search objects" placeholder="Search..." className="h-[19px] w-[186px] border border-[#9aa0a8] bg-white px-px text-[11px] italic placeholder:text-black" />
        <button aria-label="Search"><SearchGlass /></button>
      </div>
      <NavHeader title="Tables" open={open.tables} onToggle={() => setOpen({ ...open, tables: !open.tables })} />
      <NavHeader title="Forms" open={open.forms} onToggle={() => setOpen({ ...open, forms: !open.forms })} />
      {open.forms && <NavList items={FORMS} icon={<FormIcon />} />}
      <NavHeader title="Reports" open={open.reports} onToggle={() => setOpen({ ...open, reports: !open.reports })} />
      {open.reports && <NavList items={REPORTS} icon={<ReportIcon />} />}
    </aside>
  )
}

/* ---------- document area ---------- */

function DocTabs() {
  return (
    <div className="flex h-[23px] items-end border-b border-[#8b9097] bg-[#abb2be] pr-[8px] pl-px text-[11px]">
      <button className="relative flex h-[22px] w-[186px] items-center gap-2 pl-[6px] text-[#3b3f46]">
        <svg className="absolute inset-0" width="186" height="22" aria-hidden="true">
          <defs>
            <linearGradient id="tab-idle" x1="0" y1="0" x2="0" y2="1">
              <stop offset="0" stopColor="#dfe2e7" />
              <stop offset="0.500" stopColor="#d3d7dc" />
              <stop offset="0.550" stopColor="#b8bdc6" />
              <stop offset="1" stopColor="#d0d3d9" />
            </linearGradient>
          </defs>
          <path d="M0.500 22V4q0-3.500 3.500-3.500h168q7 0 10 7l3.500 7V22" fill="url(#tab-idle)" stroke="#868c95" />
        </svg>
        <span className="relative"><FormIcon /></span>
        <span className="relative">Sahan Registration DataBase</span>
      </button>
      <button className="relative flex h-[22px] w-[97px] items-center gap-2 pl-[6px] font-bold text-black">
        <svg className="absolute inset-0" width="97" height="22" aria-hidden="true">
          <defs>
            <linearGradient id="tab-active" x1="0" y1="0" x2="0" y2="1">
              <stop offset="0" stopColor="#fde3c1" />
              <stop offset="0.450" stopColor="#fdc57e" />
              <stop offset="0.550" stopColor="#f9a744" />
              <stop offset="1" stopColor="#f3dcc0" />
            </linearGradient>
          </defs>
          <path d="M0.500 22V4q0-3.500 3.500-3.500h74q7 0 10 7l5 10q2 4 4 4.500" fill="url(#tab-active)" stroke="#a98d68" />
        </svg>
        <span className="relative"><FormIcon /></span>
        <span className="relative">Passenger</span>
      </button>
      <button aria-label="Close tab" className="mb-[7px] ml-auto">
        <Svg w={9} h={8}><path d="M1 0.500l7 7M8 0.500l-7 7" stroke="#33373d" strokeWidth="1.600" /></Svg>
      </button>
    </div>
  )
}

function FieldInput({ field }: { field: Field }) {
  const frame = 'block w-full border border-[#a6a6a6] bg-white px-1 text-[12px] text-[#3f3f3f]'
  if (field.kind === 'new') {
    return (
      <div className="flex h-[25px] border border-[#a6a6a6] px-[3px] py-px">
        <div className="flex w-full items-start bg-white">
          <input id={field.id} readOnly value={field.value} className="field-sizing-content h-[18px] border-l border-white bg-[#3f3f3f] px-px text-[13px] text-[#e4d8ff] outline-none" />
        </div>
      </div>
    )
  }
  if (field.kind === 'tall') return <textarea id={field.id} className={clsx(frame, 'h-10 resize-none')} />
  if (field.kind === 'combo') {
    return (
      <div className="relative h-[25px]">
        <select id={field.id} className={clsx(frame, 'h-[25px] appearance-none')} />
        <span className="pointer-events-none absolute top-px right-px flex h-[23px] w-[17px] items-center justify-center border border-[#6b6b6b] bg-linear-to-b from-[#f4f4f4] to-[#cfcfcf]">
          <Svg w={7} h={4}><path d="M0 0h7L3.500 4z" fill="#000" /></Svg>
        </span>
      </div>
    )
  }
  return <input id={field.id} defaultValue={field.value} className={clsx(frame, 'h-[25px] pb-[2px]')} />
}

function FormButton({ className, label, children }: { className: string; label?: string; children: ReactNode }) {
  return (
    <button
      aria-label={label}
      className={clsx('flex items-center justify-center rounded-[3px] border border-[#8fb6e2] bg-linear-to-b from-[#e6f1fe] to-[#b6d8fa] font-bold', className)}
    >
      {children}
    </button>
  )
}

function PassengerForm() {
  return (
    <div className="flex flex-1 bg-[#3f3f3f]">
      <div className="w-[19px] shrink-0 border-t border-r border-black bg-[#e8ebf0] pt-[2px] pl-2">
        <Svg w={6} h={11}><path d="M0 0v11l6-5.500z" fill="#000" /></Svg>
      </div>
      <div className="flex items-start pt-[23px] pl-[14px]">
        <div className="flex w-[126px] flex-col gap-[11px] border-2 border-[#f4f4f4] border-r-[#a6a6a6] bg-[#dfdbe6] pl-[11px] text-[13px] leading-[19px] text-black outline-1 -outline-offset-1 outline-[#a6a6a6]">
          {FIELDS.map((f) => (
            <label key={f.id} htmlFor={f.id} className={clsx(f.kind === 'tall' ? 'h-10' : 'h-[25px]', 'last:h-[23px]')}>
              {f.label}
            </label>
          ))}
        </div>
        <div className="ml-[3px] flex w-[291px] flex-col gap-[11px] pt-px">
          {FIELDS.map((f) => (
            <FieldInput key={f.id} field={f} />
          ))}
        </div>
        <div className="ml-[56px] flex w-[438px] flex-col pt-[14px]">
          <h3 className="pl-[30px] font-[Lato,sans-serif] text-[33px] leading-[35px] font-black text-[#ff0000]">
            FIVESTAR BUS
            <br />
            TERMINAL AND
            <br />
            LOGISTIC
          </h3>
          <div className="mt-[25px] mr-4 ml-6 flex h-[199px] justify-between border-2 border-white pt-[19px] pr-[34px] pl-[31px] font-['Open_Sans',sans-serif] text-[20px] text-[#3f3f3f] outline-1 -outline-offset-1 outline-[#a6a6a6]">
            <div className="flex flex-col gap-[39px]">
              <FormButton className="h-[57px] w-[137px] pt-[2px] pr-[6px]">Add</FormButton>
              <FormButton className="h-[61px] w-[133px] pt-[2px] pr-[6px]">Delete</FormButton>
            </div>
            <div className="flex flex-col items-end gap-[35px] pt-1">
              <FormButton className="h-[57px] w-[145px] pt-[2px] pr-[6px]">Save</FormButton>
              <FormButton className="h-[57px] w-[141px] pt-[2px] pr-[6px]">Close</FormButton>
            </div>
          </div>
          <div className="mt-[13px] flex h-[78px] border-2 border-white pt-[11px] pl-[11px] text-[16px] text-black outline-1 -outline-offset-1 outline-[#a6a6a6]">
            <FormButton label="First record" className="h-[45px] w-[77px]">
              <Svg w={12} h={12}><path d="M0 0h4v12H0zM12 0v12L4 6z" fill="#4a7db5" /></Svg>
            </FormButton>
            <FormButton label="Last record" className="ml-[23px] h-[45px] w-[81px]">
              <Svg w={12} h={12}><path d="M8 0h4v12H8zM0 0v12l8-6z" fill="#4a7db5" /></Svg>
            </FormButton>
            <FormButton label="Find record" className="ml-[27px] h-[45px] w-[73px]">
              <Svg w={15} h={13}>
                <path d="M3.500 0.500h3v3l1 1 1-1v-3h3v3l3 4v5h-5v-4h-4v4h-5v-5l3-4z" fill="#6b6b6b" stroke="#595959" />
                <path d="M2 8v4M4.500 2v1M10.500 2v1M11 9v3M5 5l-1 2M10 5l-1 2" stroke="#e9f1fb" />
              </Svg>
            </FormButton>
            <FormButton className="ml-[39px] h-[45px] w-[89px] pr-[6px]">Print</FormButton>
          </div>
        </div>
      </div>
    </div>
  )
}

function RecordBar() {
  return (
    <div className="flex h-[20px] items-center border-y border-[#a0a5b3] bg-linear-to-b from-[#f3f4f7] from-50% to-[#e5e7eb] to-50% pl-[5px] text-[11px] text-[#3b3f46]">
      <span className="w-[46px]">Record:</span>
      <button aria-label="First" className="w-[18px]"><JumpIcon kind="first" /></button>
      <button aria-label="Previous" className="w-[9px]"><JumpIcon kind="prev" color="#adb0b7" /></button>
      <input aria-label="Record number" defaultValue="1 of 1" className="h-4 w-[50px] border border-[#d9dbe0] bg-white px-px text-black" />
      <button aria-label="Next" className="ml-2 w-[17px]"><JumpIcon kind="next" color="#adb0b7" /></button>
      <button aria-label="Last" className="w-[14px]"><JumpIcon kind="last" /></button>
      <button aria-label="New record" className="flex w-[15px] items-center">
        <JumpIcon kind="next" color="#c3c6cb" />
        <Svg w={7} h={8}><path d="M3.500 0v8M0 4h7M1 1l5 6M6 1L1 7" stroke="#f1dfa0" /></Svg>
      </button>
      <span className="mx-[5px] h-full w-px bg-[#b9bdc4]" />
      <button disabled className="flex items-center gap-[2px] text-[#9b9ea3]">
        <FunnelSmall extra="cross" />
        No Filter
      </button>
      <span className="mr-[5px] ml-2 h-full w-px bg-[#b9bdc4]" />
      <input aria-label="Search records" defaultValue="Search" className="h-4 w-[71px] border border-[#d0d2d8] bg-white px-px text-black" />
    </div>
  )
}

/* ---------- status bar ---------- */

function StatusBar() {
  const stroke = '#55585e'
  return (
    <footer className="flex h-[21px] items-center border-t border-white bg-linear-to-b from-[#e3e5ea] to-[#babdc3] pr-[5px] pb-px pl-2 text-[11px] text-[#3b3f46]">
      <span className="flex-1">Form View</span>
      <span className="h-5 w-px bg-[#7b7f87]" />
      <div className="flex flex-1 items-center justify-end">
        <span className="mr-[5px] h-5 w-px bg-[#8b8f97]" />
        <button aria-label="Form view" className="flex h-[19px] w-[19px] items-center justify-center rounded-[2px] border border-[#c18a1e] bg-[#fddc72]">
          <Svg w={12} h={10}>
            <rect x="0.500" y="0.500" width="11" height="9" fill="#fff" stroke={stroke} />
            <path d="M0 2h12M2 5.500h3M2 7.500h3M6 5.500h4M6 7.500h4" stroke={stroke} />
          </Svg>
        </button>
        <button aria-label="Datasheet view" className="ml-1">
          <Svg w={12} h={11}><path d="M0.500 3.500h10v6h-10zM4 0.500v9M7.500 0.500v9M0 6.500h11M4 0.500h4" fill="none" stroke={stroke} /><circle cx="9" cy="8" r="2" fill={stroke} /></Svg>
        </button>
        <button aria-label="PivotTable view" className="ml-[6px]">
          <Svg w={12} h={11}><path d="M0.500 4v6h10M3.500 3v5h4M5.500 8V1.500l2-1v7.500M9.500 2v6" fill="none" stroke={stroke} /></Svg>
        </button>
        <button aria-label="Layout view" className="ml-[6px]">
          <Svg w={12} h={11}><path d="M1 0.500h10M1 10.500h10M2.500 0v11M9.500 0v11M4 3.500h2M4 7.500h4M6 5.500h3" fill="none" stroke={stroke} /></Svg>
        </button>
        <button aria-label="Design view" className="ml-[6px]">
          <Svg w={12} h={11}><path d="M0.500 1v9h10" fill="none" stroke={stroke} /><path d="M2 2l7 7M11 1L4 8" stroke={stroke} strokeWidth="1.500" /></Svg>
        </button>
      </div>
    </footer>
  )
}

/* ---------- taskbar ---------- */

function Wallpaper() {
  return (
    <svg className="absolute inset-0 h-full w-full" viewBox="0 0 1600 40" preserveAspectRatio="none" aria-hidden="true">
      <defs>
        <filter id="blur" x="-5%" y="-50%" width="110%" height="200%">
          <feGaussianBlur stdDeviation="3" />
        </filter>
      </defs>
      <rect width="1600" height="40" fill="#11161c" />
      <g filter="url(#blur)">
        <path d="M0-10h290l8 18 10 12-6 24H0z" fill="#88a8cb" />
        <path d="M308 32q14-14 26-4l14 16h-40z" fill="#9dbde0" />
        <path d="M344 0h14l6 14-12 12z" fill="#6d86a3" />
        <path d="M372 30l14 4-4 10h-14z" fill="#7893b3" />
        <path d="M562 14q6-14 22-12l22 14 8 8-14 4-20-6-4 8-2 14h-26l4-20z" fill="#9dbfe2" />
        <path d="M617-4h16l-6 12h-8zM620 34h8v8h-8z" fill="#9dbfe2" />
        <path d="M672-4h14v18l60-6 40-8h92l-4 20 8 24h-18l-12-16-62 4-14 8-34 2-18-8-52 4q-8-8 4-14z" fill="#4d6e6c" />
        <path d="M882 2l84 42h-58z" fill="#4d6e6c" />
        <path d="M1020-4h50l20 48h-50z" fill="#1b1f29" />
        <path d="M1095 44q30-38 56-36 34 10 44 36z" fill="#a9cdf3" />
        <path d="M1145 2l118-4 2 28-38-4-10 20h-24z" fill="#4b6080" />
        <path d="M1295 38l60-26 50-10h200v44h-300z" fill="#8ba8ca" />
        <path d="M1312-2h50l14 20-40 6z" fill="#5e6c7a" />
        <path d="M1480 20l50-24 60 8v40h-90z" fill="#94aecb" />
      </g>
      <rect width="1600" height="2" fill="#a8c4dd" opacity="0.500" />
    </svg>
  )
}

function TaskButton({ label, active, stacked, children }: { label: string; active?: boolean; stacked?: boolean; children: ReactNode }) {
  return (
    <button
      aria-label={label}
      className={clsx(
        'relative flex h-[38px] w-[58px] items-center justify-center rounded-[3px] border',
        active
          ? 'border-white/90 bg-linear-to-b from-white/60 to-white/50'
          : 'border-white/70 bg-linear-to-br from-white/45 to-[#b8d8ff]/20',
        stacked && 'pr-1 shadow-[inset_-4px_0_0_-1px_rgb(40_60_90/0.4)]',
      )}
    >
      {children}
    </button>
  )
}

function Taskbar() {
  return (
    <div className="relative flex h-10 items-center overflow-hidden border-t border-[#1a2430] text-white">
      <Wallpaper />
      <button aria-label="Start" className="relative ml-2 w-[51px]">
        <Svg w={38} h={38}>
          <defs>
            <radialGradient id="orb" cx="0.500" cy="0.850" r="0.850">
              <stop offset="0" stopColor="#3fc0ee" />
              <stop offset="0.500" stopColor="#1d5f96" />
              <stop offset="1" stopColor="#7c9cbc" />
            </radialGradient>
          </defs>
          <circle cx="19" cy="19" r="17.500" fill="url(#orb)" stroke="#173a5c" strokeWidth="1.500" />
          <path d="M9 12q4-3 9-1l-1.500 8q-4-2-9 0z" fill="#e8592b" />
          <path d="M19.500 11.500q4 2.500 9.500 0l-2 8q-5 2-9 0z" fill="#8dc63f" />
          <path d="M7 20.500q5-2 9-.5l-1.500 7.500q-4-2-9 0z" fill="#3fa3e8" />
          <path d="M17.500 20.500q4 2 9 .5l-1.500 7.500q-5 2-9 0z" fill="#fbc52c" />
        </Svg>
      </button>
      <div className="relative flex gap-1">
        <TaskButton label="Outlook">
          <Svg w={34} h={32}>
            <path d="M10 1h21v29H3V3z" fill="#fbe3a6" stroke="#e39a1c" strokeWidth="1.500" />
            <path d="M12 20h20v10H12l3-5z" fill="#fff6dc" stroke="#e8a63a" />
            <path d="M12 20l10 7 10-7" fill="none" stroke="#e8a63a" />
            <ellipse cx="11" cy="12" rx="6" ry="7.500" fill="none" stroke="#d98708" strokeWidth="4.500" />
            <circle cx="26" cy="13" r="5.500" fill="#fff" stroke="#e39a1c" strokeWidth="2" />
            <path d="M26 10v3h3" fill="none" stroke="#a86a0c" />
          </Svg>
        </TaskButton>
        <TaskButton label="Internet Explorer" stacked>
          <Svg w={34} h={32}>
            <path d="M26 21.500q-2.500 6-9 6-9.500 0-9.500-9.500T17 8.500t10 9.500H12" fill="none" stroke="#2a8ed2" strokeWidth="6" />
            <path d="M26 21.500q-2.500 6-9 6-9.500 0-9.500-9.500T17 8.500t10 9.500H12" fill="none" stroke="#5cc4f2" strokeWidth="4" />
            <path d="M4 29q-5-4 6-15T30 3q3 2-1 7" fill="none" stroke="#f6c326" strokeWidth="2.500" />
          </Svg>
        </TaskButton>
        <TaskButton label="Explorer">
          <Svg w={34} h={32}>
            <path d="M3 4h10l2 3h15v20H3z" fill="#f1d27a" stroke="#c59a3c" />
            <path d="M6 2h7v4H6z" fill="#5ab05a" />
            <path d="M15 4h7v3h-7z" fill="#d84c3e" />
            <path d="M23 6h6v3h-6z" fill="#4b94d8" />
            <path d="M2 10h29v18H2z" fill="#fbe9a9" stroke="#d5ae51" />
            <path d="M7 30V20h21v10h-5v-5H12v5z" fill="#9fd5ee" stroke="#4d9fc8" />
            <path d="M6 14v8M2 18h8" stroke="#fff" />
          </Svg>
        </TaskButton>
        <TaskButton label="Firefox">
          <Svg w={34} h={32}>
            <circle cx="17" cy="16" r="14" fill="#e66a17" />
            <path d="M14 3q10-2 14 6 2 8-3 12-7 4-11-1-3-4 0-7z" fill="#27408b" />
            <path d="M15 4q7-2 10 3l-4 3-5-1z" fill="#5ca5e0" />
            <path d="M4 6q3 2 5 0 1 4 6 5l-3 3q2 3 6 2-4 6-9 2 2 8 11 6 8-3 8-11 4 10-5 15-12 5-18-5-3-8-1-17z" fill="#fa9a1f" />
            <path d="M27 6q5 8 1 15 0-8-5-11z" fill="#fcd23e" />
          </Svg>
        </TaskButton>
        <TaskButton label="Sticky Notes">
          <Svg w={34} h={32}>
            <path d="M3 10l13-6 7 15-14 5z" fill="#a4dd8a" stroke="#6db358" />
            <path d="M14 12l14-4 4 14-14 6z" fill="#fbe27a" stroke="#d8b73d" />
          </Svg>
        </TaskButton>
        <TaskButton label="Skype" stacked>
          <Svg w={34} h={34}>
            <circle cx="11" cy="10" r="8.500" fill="#fff" />
            <circle cx="20" cy="21" r="9" fill="#fff" />
            <circle cx="16" cy="16" r="12.500" fill="#12a5e8" stroke="#fff" strokeWidth="1.500" />
            <path d="M20.500 12q-2-3-5.500-2.500-4 1-3 4 1 1.800 4.500 2.500t4 3q0 3.500-4.500 3.500-4 0-5-3" fill="none" stroke="#fff" strokeWidth="2.800" />
            <circle cx="27" cy="27" r="6" fill="#4aa832" stroke="#e7f5df" />
            <path d="M24 27l2.500 2.500L30.500 25" fill="none" stroke="#fff" strokeWidth="1.600" />
          </Svg>
        </TaskButton>
        <TaskButton label="Tools">
          <Svg w={34} h={34}>
            <rect x="4" y="2" width="23" height="22" fill="#f3f5f8" stroke="#c2c8d0" />
            <path d="M4 4.500h23" stroke="#8aa0c0" strokeWidth="3" />
            <path d="M6 9h5M6 12h5M6 15h5M6 18h5" stroke="#6b83a8" />
            <path d="M14 18q0-5 7-5t7 5" fill="none" stroke="#8e1f1b" strokeWidth="2" />
            <path d="M5 19l3-2h23l2 3v11H7z" fill="#d12a25" stroke="#831512" />
            <path d="M6 22h26" stroke="#7f1411" />
            <rect x="11" y="21" width="4" height="4" fill="#ddd" />
            <rect x="25" y="21" width="4" height="4" fill="#ddd" />
          </Svg>
        </TaskButton>
        <TaskButton label="Access" active>
          <Svg w={34} h={34}>
            <path d="M11 2h17v29H3V4z" fill="#f9e3ec" stroke="#c0155c" strokeWidth="2" />
            <path d="M6 24l5-16h3l5 16M8 19h9" fill="none" stroke="#b50f52" strokeWidth="3.500" />
            <circle cx="25" cy="15" r="5.500" fill="#fff" stroke="#d64a86" strokeWidth="1.500" />
            <path d="M22 19l-4 8h5l4-7" fill="#fff" stroke="#d64a86" strokeWidth="1.500" />
            <circle cx="27" cy="14" r="1.300" fill="#b50f52" />
          </Svg>
        </TaskButton>
      </div>
      <div className="relative ml-auto flex h-full items-center">
        <div className="flex h-full items-center gap-[10px] rounded-tl-2xl border-t border-r border-l border-r-[#3c4c5e] border-l-white/40 border-t-white/40 bg-[#8ba4c0]/30 pr-3 pl-3">
          <span className="flex items-center">
            <span className="flex h-5 w-[43px] items-center justify-center border border-white bg-linear-to-r from-[#1da045] from-20% to-black to-20% text-[12px]">
              (0:34)
            </span>
            <span className="h-2 w-[3px] border border-l-0 border-white bg-black" />
          </span>
          <Svg w={16} h={16}>
            <circle cx="8" cy="8" r="7.500" fill="#fff" stroke="#0c1899" />
            <path d="M6 6.500h3V12M5.500 12.500h5M7 3.500h2.500" stroke="#0a14c8" strokeWidth="2" fill="none" />
          </Svg>
        </div>
        <button aria-label="Show hidden icons" className="ml-[7px]">
          <Svg w={9} h={5}><path d="M4.500 0L9 5H0z" fill="#f2f6fa" /></Svg>
        </button>
        <span className="ml-4 flex items-center gap-[10px]">
          <Svg w={11} h={16}>
            <rect x="1" y="2.500" width="9" height="13" rx="1" fill="#5b6b7d" stroke="#fff" strokeWidth="1.500" />
            <path d="M3.500 1h4" stroke="#fff" strokeWidth="2" />
            <rect x="3" y="12" width="5" height="2" fill="#fff" />
          </Svg>
          <Svg w={16} h={13}>
            <path d="M1.500 13v-3M4.500 13V8.500M7.500 13V6.500M10.500 13V4M14 13V1" stroke="#fff" strokeWidth="2" />
          </Svg>
          <Svg w={17} h={15}>
            <path d="M1 5h3l4-4v13l-4-4H1z" fill="#f5f8fb" stroke="#5c7085" strokeWidth="0.800" />
            <path d="M10 5q2 2.500 0 5M12 3q3.500 4.500 0 9M14 1q5 6.500 0 13" fill="none" stroke="#fff" />
          </Svg>
        </span>
        <div className="ml-3 w-16 text-center text-[11px] leading-[17px] whitespace-nowrap">
          <div>11:49 AM</div>
          <div>12/07/2016</div>
        </div>
        <button aria-label="Show desktop" className="ml-2 h-full w-[15px] border border-[#4f6680] bg-linear-to-b from-white/30 to-white/50" />
      </div>
    </div>
  )
}

export default function App() {
  return (
    <div className="flex min-h-screen flex-col bg-[#abb2be] font-['Noto_Sans','Open_Sans',sans-serif]">
      <header>
        <div className="relative">
          <GlassBackdrop />
          <TitleBar />
          <RibbonTabs />
        </div>
        <div className="-mt-px"><Ribbon /></div>
        <div className="h-1 border-t border-[#d8dbe0] bg-[#c9cdd4]" />
      </header>
      <main className="flex flex-1">
        <div className="w-[3px] bg-[#abb2be]" />
        <NavPane />
        <div className="w-[3px] bg-[#e8eaee]" />
        <section className="flex min-w-0 flex-1 flex-col border-l-2 border-[#868c95]">
          <DocTabs />
          <div className="flex h-[35px] items-center gap-3 bg-[#d5dce6] pl-[45px]">
            <FormIconLarge />
            <h2 className="font-['Open_Sans',sans-serif] text-[21px] font-light text-[#44546a]">Passenger</h2>
          </div>
          <PassengerForm />
          <RecordBar />
        </section>
      </main>
      <StatusBar />
      <Taskbar />
    </div>
  )
}
